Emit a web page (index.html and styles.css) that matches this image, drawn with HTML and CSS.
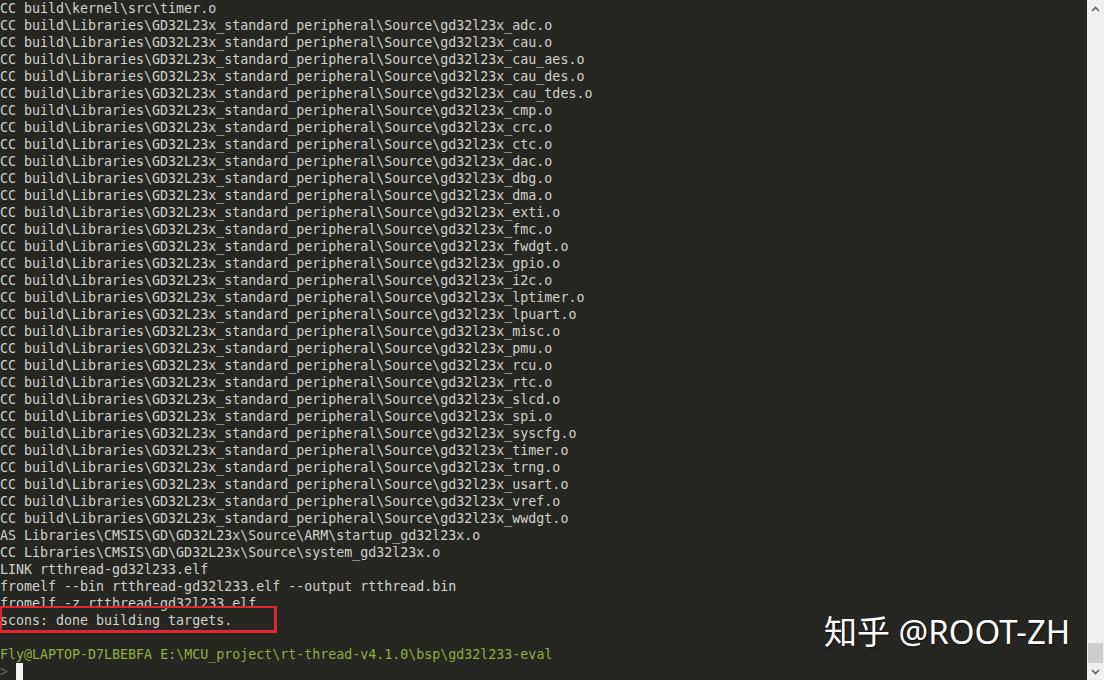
FILE: index.html
```html
<!DOCTYPE html>
<html lang="en">
<head>
    <meta charset="UTF-8">
    <title>scons build</title>
    <link rel="stylesheet" href="styles.css">
</head>
<body>
    <div class="terminal">
        <div class="screen">
            <div class="line">CC build\kernel\src\timer.o</div>
            <div class="line">CC build\Libraries\GD32L23x_standard_peripheral\Source\gd32l23x_adc.o</div>
            <div class="line">CC build\Libraries\GD32L23x_standard_peripheral\Source\gd32l23x_cau.o</div>
            <div class="line">CC build\Libraries\GD32L23x_standard_peripheral\Source\gd32l23x_cau_aes.o</div>
            <div class="line">CC build\Libraries\GD32L23x_standard_peripheral\Source\gd32l23x_cau_des.o</div>
            <div class="line">CC build\Libraries\GD32L23x_standard_peripheral\Source\gd32l23x_cau_tdes.o</div>
            <div class="line">CC build\Libraries\GD32L23x_standard_peripheral\Source\gd32l23x_cmp.o</div>
            <div class="line">CC build\Libraries\GD32L23x_standard_peripheral\Source\gd32l23x_crc.o</div>
            <div class="line">CC build\Libraries\GD32L23x_standard_peripheral\Source\gd32l23x_ctc.o</div>
            <div class="line">CC build\Libraries\GD32L23x_standard_peripheral\Source\gd32l23x_dac.o</div>
            <div class="line">CC build\Libraries\GD32L23x_standard_peripheral\Source\gd32l23x_dbg.o</div>
            <div class="line">CC build\Libraries\GD32L23x_standard_peripheral\Source\gd32l23x_dma.o</div>
            <div class="line">CC build\Libraries\GD32L23x_standard_peripheral\Source\gd32l23x_exti.o</div>
            <div class="line">CC build\Libraries\GD32L23x_standard_peripheral\Source\gd32l23x_fmc.o</div>
            <div class="line">CC build\Libraries\GD32L23x_standard_peripheral\Source\gd32l23x_fwdgt.o</div>
            <div class="line">CC build\Libraries\GD32L23x_standard_peripheral\Source\gd32l23x_gpio.o</div>
            <div class="line">CC build\Libraries\GD32L23x_standard_peripheral\Source\gd32l23x_i2c.o</div>
            <div class="line">CC build\Libraries\GD32L23x_standard_peripheral\Source\gd32l23x_lptimer.o</div>
            <div class="line">CC build\Libraries\GD32L23x_standard_peripheral\Source\gd32l23x_lpuart.o</div>
            <div class="line">CC build\Libraries\GD32L23x_standard_peripheral\Source\gd32l23x_misc.o</div>
            <div class="line">CC build\Libraries\GD32L23x_standard_peripheral\Source\gd32l23x_pmu.o</div>
            <div class="line">CC build\Libraries\GD32L23x_standard_peripheral\Source\gd32l23x_rcu.o</div>
            <div class="line">CC build\Libraries\GD32L23x_standard_peripheral\Source\gd32l23x_rtc.o</div>
            <div class="line">CC build\Libraries\GD32L23x_standard_peripheral\Source\gd32l23x_slcd.o</div>
            <div class="line">CC build\Libraries\GD32L23x_standard_peripheral\Source\gd32l23x_spi.o</div>
            <div class="line">CC build\Libraries\GD32L23x_standard_peripheral\Source\gd32l23x_syscfg.o</div>
            <div class="line">CC build\Libraries\GD32L23x_standard_peripheral\Source\gd32l23x_timer.o</div>
            <div class="line">CC build\Libraries\GD32L23x_standard_peripheral\Source\gd32l23x_trng.o</div>
            <div class="line">CC build\Libraries\GD32L23x_standard_peripheral\Source\gd32l23x_usart.o</div>
            <div class="line">CC build\Libraries\GD32L23x_standard_peripheral\Source\gd32l23x_vref.o</div>
            <div class="line">CC build\Libraries\GD32L23x_standard_peripheral\Source\gd32l23x_wwdgt.o</div>
            <div class="line">AS Libraries\CMSIS\GD\GD32L23x\Source\ARM\startup_gd32l23x.o</div>
            <div class="line">CC Libraries\CMSIS\GD\GD32L23x\Source\system_gd32l23x.o</div>
            <div class="line">LINK rtthread-gd32l233.elf</div>
            <div class="line">fromelf --bin rtthread-gd32l233.elf --output rtthread.bin</div>
            <div class="line">fromelf -z rtthread-gd32l233.elf</div>
            <div class="line">scons: done building targets.</div>
            <div class="line"></div>
            <div class="line prompt-info"><span class="user">Fly@LAPTOP-D7LBEBFA</span> <span class="cwd">E:\MCU_project\rt-thread-v4.1.0\bsp\gd32l233-eval</span></div>
            <div class="line"><span class="caret">&gt;</span> <span class="cursor"></span></div>

            <!-- annotation over the output -->
            <div class="highlight"></div>
            <div class="watermark">知乎 @ROOT-ZH</div>
        </div>

        <div class="scrollbar">
            <div class="arrow">
                <svg width="9" height="6" viewBox="0 0 9 6"><path d="M1 5 L4.5 1.5 L8 5" fill="none" stroke="#606060" stroke-width="1.6"/></svg>
            </div>
            <div class="track">
                <div class="thumb"></div>
            </div>
            <div class="arrow">
                <svg width="9" height="6" viewBox="0 0 9 6"><path d="M1 1 L4.5 4.5 L8 1" fill="none" stroke="#606060" stroke-width="1.6"/></svg>
            </div>
        </div>
    </div>
</body>
</html>
```

FILE: styles.css
```css
body {
    margin: 0;
    background-color: #262622;
}

.terminal {
    display: flex;
    width: 1104px;
    height: 680px;
    overflow: hidden;
}

.screen {
    position: relative;
    flex: 1;
    font-family: "DejaVu Sans Mono", "Liberation Mono", monospace;
    font-size: 13.3px;
    color: #d2d2cc;
    background-color: #262622;
}

.line {
    height: 17px;
    line-height: 17px;
    white-space: pre;
}

.user,
.cwd {
    color: #8fb03a;
}

.caret {
    color: #6a6a66;
}

.cursor {
    display: inline-block;
    width: 7px;
    height: 17px;
    vertical-align: top;
    background-color: #f4f4f4;
}

/* red box round the last build message */
.highlight {
    position: absolute;
    left: 0;
    top: 606px;
    width: 272px;
    height: 22px;
    border: 2px solid #e2262e;
    border-width: 2px 3px 3px 2px;
}

.watermark {
    position: absolute;
    left: 824px;
    top: 606px;
    font-family: "Noto Sans", "Noto Sans CJK SC", sans-serif;
    font-size: 33px;
    color: #ffffff;
    text-shadow: 1px 1px 2px rgba(0, 0, 0, 0.6);
    white-space: nowrap;
}

.scrollbar {
    display: flex;
    flex-direction: column;
    width: 17px;
    background-color: #f0f0f0;
}

.arrow {
    display: flex;
    align-items: center;
    justify-content: center;
    height: 17px;
}

.track {
    flex: 1;
    display: flex;
    flex-direction: column;
    justify-content: flex-end;
}

.thumb {
    height: 20px;
    margin: 0 1px;
    background-color: #cdcdcd;
}
```
